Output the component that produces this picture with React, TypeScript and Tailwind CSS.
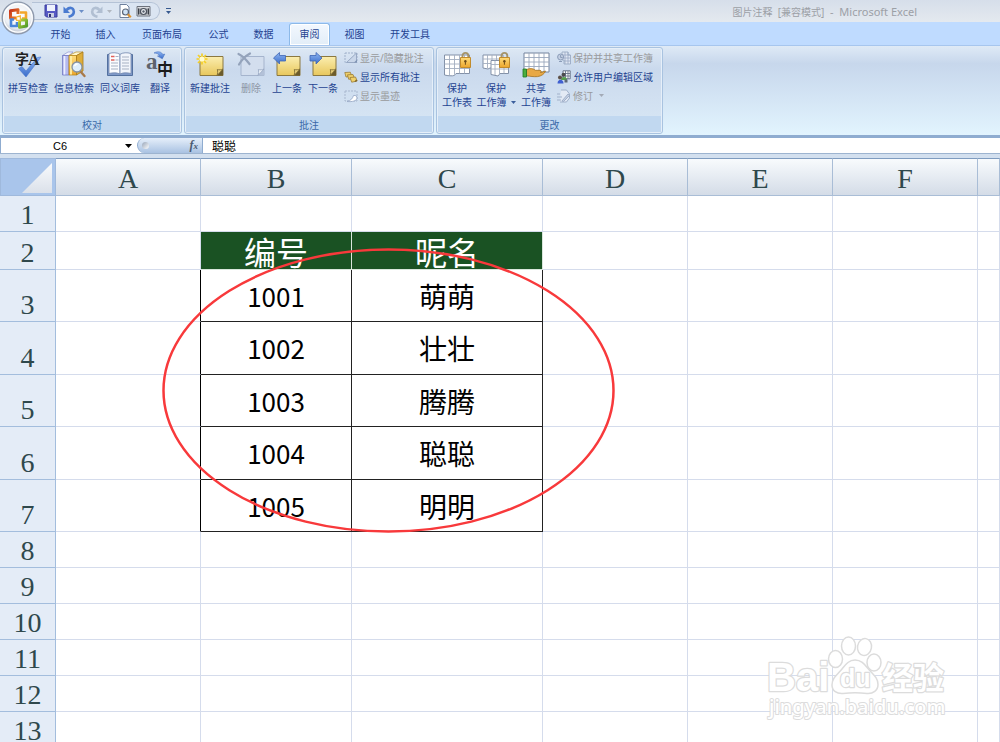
import type { ReactNode } from "react";

const UI_FONT = "font-['Noto_Sans','Noto_Sans_CJK_SC',sans-serif]";

/* ---------- Quick access icons ---------- */

function OfficeLogo() {
  return (
    <svg viewBox="0 0 34 34" className="size-[34px]" aria-hidden="true">
      <defs>
        <radialGradient id="orb" cx="0.5" cy="0.4" r="0.6">
          <stop offset="0" stopColor="#ffffff" />
          <stop offset="0.7" stopColor="#eceff4" />
          <stop offset="1" stopColor="#a9b2c1" />
        </radialGradient>
        <linearGradient id="orbRed" x1="0" y1="0" x2="1" y2="1">
          <stop offset="0" stopColor="#c4331b" />
          <stop offset="1" stopColor="#f08a2c" />
        </linearGradient>
        <linearGradient id="orbGreen" x1="0" y1="0" x2="1" y2="1">
          <stop offset="0" stopColor="#b9cf3a" />
          <stop offset="1" stopColor="#4d9a2a" />
        </linearGradient>
      </defs>
      <circle cx="17" cy="17" r="15.8" fill="url(#orb)" stroke="#8e99ac" strokeWidth="1.300" />
      <circle cx="17" cy="17" r="14.2" fill="none" stroke="#fff" strokeWidth="1.200" />
      <g fill="none" strokeLinejoin="round">
        <path d="M15 17H9.500V9.800L17 8.800V13" stroke="url(#orbRed)" strokeWidth="3" />
        <path d="M19 11.500H25V17.500H21" stroke="#f3a62a" strokeWidth="2.600" />
        <path d="M13 18.500H10v6.500h6V21" stroke="#4a86d8" strokeWidth="2.600" />
        <path d="M19 19h6.500v6L18.500 26.300V21.500z" stroke="url(#orbGreen)" strokeWidth="3" />
      </g>
      <path d="M15 15.500l5-1.500v6h-5z" fill="#f6b73c" />
      <path d="M16.200 16.200h2.600v2.600h-2.600z" fill="#fff" />
    </svg>
  );
}

function SaveIcon() {
  return (
    <svg viewBox="0 0 14 14" className="size-[14px]" aria-hidden="true">
      <path d="M1 1h12v12H2.500L1 11.500z" fill="#5659c4" stroke="#3a3e9e" />
      <path d="M3 1h8v6H3z" fill="#eef2fd" />
      <path d="M4 9h6v4H4z" fill="#c9cfe4" />
      <path d="M5 10h2v3H5z" fill="#2d3170" />
    </svg>
  );
}

function UndoIcon({ muted = false }: { muted?: boolean }) {
  const tone = muted ? "#b1bfd2" : "#4a7bd0";
  return (
    <svg viewBox="0 0 14 14" className={muted ? "size-[14px] -scale-x-100" : "size-[14px]"} aria-hidden="true">
      <path d="M6.500 12.800c4-1 5.700-3.300 5.200-6C11.200 3.500 7.500 2.800 4.500 6" fill="none" stroke={tone} strokeWidth="2.600" />
      <path d="M1.500 2.500V9H8z" fill={tone} />
    </svg>
  );
}

function PreviewIcon() {
  return (
    <svg viewBox="0 0 14 14" className="size-[14px]" aria-hidden="true">
      <path d="M2 .5h6.500L11 3v10.500H2z" fill="#fff" stroke="#6d7f9c" />
      <circle cx="7.500" cy="8" r="3" fill="#cfe2f6" stroke="#5b6678" strokeWidth="1.200" />
      <path d="M9.800 10.300l3 3" stroke="#dd9433" strokeWidth="2.200" />
    </svg>
  );
}

function CameraIcon() {
  return (
    <svg viewBox="0 0 15 14" className="h-[14px] w-[15px]" aria-hidden="true">
      <path d="M1 2.500h13v9.500H1z" fill="#d9dbdf" stroke="#6d727c" />
      <path d="M2 4.500h11v6H2z" fill="#8c9097" />
      <circle cx="7.500" cy="7.500" r="3" fill="#edf0f5" stroke="#4c525d" strokeWidth="1.200" />
      <circle cx="7.500" cy="7.500" r="1.200" fill="#59606d" />
      <path d="M2.500 4.500v6M12.500 4.500v6" stroke="#3a3f48" />
    </svg>
  );
}

function Caret({ className }: { className: string }) {
  return (
    <svg viewBox="0 0 5 3" className={`h-[3px] w-[5px] shrink-0 ${className}`} aria-hidden="true">
      <path d="M0 0h5L2.500 3z" fill="currentColor" />
    </svg>
  );
}

/* ---------- Large ribbon icons (28 x 28) ---------- */

function Big({ children }: { children: ReactNode }) {
  return (
    <svg viewBox="0 0 28 28" className="size-7 shrink-0 overflow-visible" aria-hidden="true">
      <defs>
        <linearGradient id="paper" x1="0" y1="0" x2="0" y2="1">
          <stop offset="0" stopColor="#fbeeb0" />
          <stop offset="1" stopColor="#e8c75c" />
        </linearGradient>
        <linearGradient id="blue" x1="0" y1="0" x2="0" y2="1">
          <stop offset="0" stopColor="#8fb6f2" />
          <stop offset="1" stopColor="#3a6dcb" />
        </linearGradient>
        <linearGradient id="gold" x1="0" y1="0" x2="0" y2="1">
          <stop offset="0" stopColor="#ffdc7a" />
          <stop offset="1" stopColor="#eba52c" />
        </linearGradient>
      </defs>
      {children}
    </svg>
  );
}

function SpellIcon() {
  return (
    <Big>
      <path d="M4.500 17.500l3.500-2 4 4.500L23.500 6.500l3.500-.5L12 26z" fill="url(#blue)" stroke="#4674cc" strokeWidth=".6" />
      <text x="1" y="12.500" fontSize="14" fontWeight="700" fill="#222" fontFamily="Noto Sans CJK SC, sans-serif">字</text>
      <text x="14" y="14" fontSize="16" fontWeight="700" fill="#222" fontFamily="Liberation Serif, serif">A</text>
    </Big>
  );
}

function ResearchIcon() {
  return (
    <Big>
      <path d="M2.500 4.500L8 1h5L9 4.500z" fill="#f3f4fd" stroke="#8d93cf" strokeWidth=".7" />
      <path d="M2.500 4.500H9V24H2.500z" fill="#b5baf0" stroke="#7278c2" strokeWidth=".8" />
      <path d="M4.500 5v18.500" stroke="#eceeff" strokeWidth="1.600" />
      <path d="M9 4.500L16 1h7l-6.500 3.500z" fill="#fff7cf" stroke="#b48a22" strokeWidth=".7" />
      <path d="M9 4.500h7.500V24H9z" fill="url(#gold)" stroke="#b98a1e" strokeWidth=".8" />
      <path d="M16.500 4.500L23 1v19l-6.500 4z" fill="#dfae3a" stroke="#a87a18" strokeWidth=".8" />
      <path d="M11 5v18.500" stroke="#fff0a8" strokeWidth="1.800" />
      <path d="M20.500 20.500l4 4.500" stroke="#a87a4a" strokeWidth="2.400" strokeLinecap="round" />
      <circle cx="17" cy="16" r="5" fill="#dff0fd" stroke="#8793a3" strokeWidth="1.300" />
      <path d="M14.500 15c.6-1.500 1.800-2 3-2" stroke="#fff" strokeWidth="1.300" fill="none" />
    </Big>
  );
}

function ThesaurusIcon() {
  return (
    <Big>
      <path d="M1.500 3.500h25v21h-25z" fill="#7f99c9" stroke="#54719f" />
      <path d="M3 2.500c4-1.200 8-1 11 .8V23c-3-1.500-7-1.500-11-.5z" fill="#fbfcff" stroke="#7187ad" strokeWidth=".8" />
      <path d="M25 2.500c-4-1.200-8-1-11 .8V23c3-1.500 7-1.500 11-.5z" fill="#f2f5fb" stroke="#7187ad" strokeWidth=".8" />
      <path d="M5 5.500h3.500M5 9h3.500" stroke="#e0605a" strokeWidth="1.300" />
      <path d="M9.500 5.500h3M9.500 9h3M5 12h7M5 15h7M5 18h7M16 6h7M16 9h7M16 12h7M16 15h7M16 18h7" stroke="#a7b1c3" strokeWidth="1" />
    </Big>
  );
}

function TranslateIcon() {
  return (
    <Big>
      <text x="0" y="18" fontSize="23" fontWeight="700" fill="#5d636d" fontFamily="Liberation Serif, serif">a</text>
      <text x="11" y="24" fontSize="16" fontWeight="700" fill="#1b1b1b" fontFamily="Noto Sans CJK SC, sans-serif">中</text>
      <path d="M8 2C12-.3 15.500.8 16.800 3.500l2-.4-2.500 4.700-4.800-2.700 2-.6C12.300 2.800 10.500 2 8 2z" fill="url(#blue)" stroke="#3c68ba" strokeWidth=".5" />
    </Big>
  );
}

function Note({ muted = false }: { muted?: boolean }) {
  return (
    <>
      <path d="M4 5.500h23V24.500H4z" fill={muted ? "#d3deee" : "url(#paper)"} stroke={muted ? "#a5b4cd" : "#8b7840"} strokeWidth="1" />
      <path d="M27 18L21 24.500h6z" fill={muted ? "#b3c1d8" : "#6b5b2c"} />
      <path d="M21 24.500c.8-2 .8-4 .3-6 2 .6 4 .3 5.700-.5z" fill={muted ? "#eaf0f8" : "#e8cf7a"} stroke={muted ? "#94a4c0" : "#75642f"} strokeWidth=".8" />
    </>
  );
}

function NewNoteIcon() {
  return (
    <Big>
      <Note />
      <path d="M6 2.500v11M.5 8h11M2 4l8 8M10 4l-8 8" stroke="#f5cf26" strokeWidth="1.700" />
      <circle cx="6" cy="8" r="2.600" fill="#fffbd2" />
    </Big>
  );
}

function DeleteNoteIcon() {
  return (
    <Big>
      <Note muted />
      <path d="M1.500 3c4 2 8 6 11 10M13 2.500C8.500 5 4.500 9 2 13.500" fill="none" stroke="#94a3bb" strokeWidth="2.200" strokeLinecap="round" />
    </Big>
  );
}

function PrevNoteIcon() {
  return (
    <Big>
      <Note />
      <path d="M.5 7L6.500 1.500v3h6V10h-6v3z" fill="url(#blue)" stroke="#3f66b4" strokeWidth=".8" />
    </Big>
  );
}

function NextNoteIcon() {
  return (
    <Big>
      <Note />
      <path d="M13 7L7 1.500v3H1V10h6v3z" fill="url(#blue)" stroke="#3f66b4" strokeWidth=".8" />
    </Big>
  );
}

function Padlock() {
  return (
    <>
      <path d="M19.500 7V4.800a2.900 2.900 0 0 1 5.800 0V7" fill="none" stroke="#a5946a" strokeWidth="1.900" />
      <path d="M17.500 6.500h10V16.500h-10z" fill="url(#gold)" stroke="#bd831f" strokeWidth=".9" />
      <circle cx="22.400" cy="10.300" r="1.200" fill="#6e4c18" />
      <path d="M21.900 10.500h1v3.200h-1z" fill="#6e4c18" />
    </>
  );
}

function ProtectSheetIcon() {
  return (
    <Big>
      <path d="M1.500 4h25v18.500H13c-1 2-3 2.500-5 2.300-2 .2-4-.3-6.500-.8z" fill="#fff" stroke="#8391a8" />
      <path d="M1.500 8.500h25M1.500 13h25M1.500 17.500h25M6.500 4v20.500M11.500 4v19.500M16.500 4v18.500M21.500 4v18.500" stroke="#a3aec0" strokeWidth=".9" />
      <Padlock />
    </Big>
  );
}

function ProtectBookIcon() {
  return (
    <Big>
      <path d="M1 4h20v13H8l-2 1-5-1z" fill="#fff" stroke="#8391a8" />
      <path d="M1 8h20M1 12.500h20M5.500 4v13M10 4v13M14.500 4v13" stroke="#a3aec0" strokeWidth=".9" />
      <path d="M9 9.500h17.500v13H18l-2 2.500-7-1.500z" fill="#fff" stroke="#8391a8" />
      <path d="M9 13.500h17.500M9 18h17.500M13 9.500v14.500M17.500 9.500v14M22 9.500v13" stroke="#a3aec0" strokeWidth=".9" />
      <Padlock />
    </Big>
  );
}

function ShareBookIcon() {
  return (
    <Big>
      <path d="M2 2h25v19H2z" fill="#fff" stroke="#75849e" />
      <path d="M2 6.500h25M2 11h25M2 15.500h25M7 2v19M12 2v19M17 2v19M22 2v19" stroke="#9aa7bc" strokeWidth=".9" />
      <path d="M4.500 18.500c4-1.500 6.500-1 9 .8h4.500c1.500.3 1.500 1.800.5 2.200 2 0 3.200-1.200 5-1.500-1 3-4 5-8 5.600-4 .3-7-.3-11-.8z" fill="#e8a845" stroke="#a4701c" strokeWidth=".8" />
      <path d="M1 18h3.500v8H1z" fill="#4cae3f" stroke="#1f7a22" strokeWidth=".8" />
    </Big>
  );
}

/* ---------- Small ribbon icons (14 x 14) ---------- */

function Small({ children }: { children: ReactNode }) {
  return (
    <svg viewBox="0 0 14 14" className="size-[14px] shrink-0" aria-hidden="true">
      {children}
    </svg>
  );
}

function ToggleNoteIcon() {
  return (
    <Small>
      <path d="M1 2h12v9.500H1z" fill="none" stroke="#9fb0ca" strokeDasharray="2 1" />
      <path d="M2.500 11.500L12.500 2v9.500z" fill="#c9d6e9" stroke="#98a9c4" />
      <path d="M13 8.500L10 11.500h3z" fill="#7f93b3" />
    </Small>
  );
}

function AllNotesIcon() {
  return (
    <Small>
      <g fill="#efd06c" stroke="#9c7c34" strokeWidth=".8">
        <path d="M.8 2.500l5.500-.3 1.500 4-5.800.8z" />
        <path d="M3.500 4.800l5.500-.3 1.500 4-5.800.8z" />
        <path d="M6 7.500l5.500-.5 1.700 4-5.500 1.200z" />
      </g>
      <path d="M13.200 11L10.500 12l1.500-2.500z" fill="#6b5220" />
    </Small>
  );
}

function InkIcon() {
  return (
    <Small>
      <path d="M1 2h12v10H1z" fill="none" stroke="#a8b7ce" strokeDasharray="2 1" />
      <path d="M3 12.500c4-1 5.500-3 6.500-6 2.500-.5 3.500 1 3.500 2.500C13 12 8 13 3 12.500z" fill="#fff" stroke="#9badc8" strokeWidth=".9" />
    </Small>
  );
}

function ProtectShareIcon() {
  return (
    <Small>
      <path d="M5 1h6v3h2.500v9H7V9H5z" fill="#dfe7f3" stroke="#9aaac4" strokeWidth=".9" />
      <path d="M8 1v12M11 1v12M5 4h8M5 7h8M7 10h6" stroke="#9aaac4" strokeWidth=".8" />
      <circle cx="3.600" cy="6" r="3" fill="#c3cfe2" stroke="#8b9cb8" />
      <path d="M3.600 4v2.500h2M2 10.500h3" stroke="#8b9cb8" fill="none" />
    </Small>
  );
}

function AllowUsersIcon() {
  return (
    <Small>
      <path d="M6 .8h7.200v8H6z" fill="#fff" stroke="#5b677d" strokeWidth=".9" />
      <path d="M6 3.500h7M6 6h7M8.500 1v8M11 1v8" stroke="#5b677d" strokeWidth=".8" />
      <circle cx="6.500" cy="4.800" r="2" fill="#4c4c4c" />
      <path d="M4 10c0-4 6-4 6 0z" fill="#57a04b" />
      <circle cx="3" cy="7.500" r="2" fill="#5d5148" />
      <path d="M.5 13.500c0-5 6-5 6 0z" fill="#3f5fd0" />
      <path d="M7.500 9.500h3v3h-3z" fill="#5b6678" />
    </Small>
  );
}

function TrackIcon() {
  return (
    <Small>
      <path d="M4 1h5.500L12.500 5v4l-3 4H3" fill="#e3eaf5" stroke="#a1b1ca" />
      <path d="M0 5h3M0 8h5M0 11h4" stroke="#a1b1ca" />
      <path d="M5 12l6-7 1.500 1.500-6 6z" fill="#c3cfe2" stroke="#95a6c1" strokeWidth=".8" />
    </Small>
  );
}

/* ---------- Ribbon building blocks ---------- */

type BigButtonProps = { icon: ReactNode; lines: string[]; width: string; muted?: boolean; caret?: boolean };

function BigButton({ icon, lines, width, muted, caret }: BigButtonProps) {
  return (
    <button
      type="button"
      disabled={muted}
      className={`flex ${width} shrink-0 flex-col items-center gap-0.5 whitespace-nowrap ${muted ? "text-[#8d96a6]" : "text-[#1f4391]"}`}
    >
      {icon}
      <span className="flex flex-col items-center">
        {lines.map((line, i) => (
          <span key={line} className="flex items-center gap-1 text-[10px] leading-[14px]">
            {line}
            {caret && i === lines.length - 1 && <Caret className="text-[#3c5f9c]" />}
          </span>
        ))}
      </span>
    </button>
  );
}

type SmallButtonProps = { icon: ReactNode; label: string; muted?: boolean; caret?: boolean };

function SmallButton({ icon, label, muted, caret }: SmallButtonProps) {
  return (
    <button
      type="button"
      disabled={muted}
      className={`flex h-[19px] items-center gap-0.5 text-[10px] leading-[14px] whitespace-nowrap ${muted ? "text-[#999a9c]" : "text-[#1f4391]"}`}
    >
      {icon}
      {label}
      {caret && <Caret className="ml-1 text-[#a3aab6]" />}
    </button>
  );
}

function Group({ title, width, children }: { title: string; width: string; children: ReactNode }) {
  return (
    <section
      aria-label={title}
      className={`flex ${width} shrink-0 flex-col overflow-hidden rounded-[3px] border border-[#a9c3e0] bg-linear-to-b from-[#dde8f4] via-[#cad9ed] via-25% to-[#d9e8f5] shadow-[inset_0_0_0_1px_#e6eff9]`}
    >
      <div className="flex flex-1 pt-[3px] pl-0.5">{children}</div>
      <h2 className="mx-px mb-px h-4 bg-[#c1d8f0] text-center text-[10px] leading-[18px] text-[#3a68a8]">{title}</h2>
    </section>
  );
}

function Ribbon() {
  return (
    <div className="flex h-[90px] gap-0.5 border-t border-[#a7c6ee] bg-linear-to-b from-[#dfeaf6] from-0% via-[#c7d7ec] via-20% to-[#e2f4fe] px-0.5 py-px">
      <Group title="校对" width="w-[180px]">
        <BigButton width="w-[46px]" icon={<SpellIcon />} lines={["拼写检查"]} />
        <BigButton width="w-[46px]" icon={<ResearchIcon />} lines={["信息检索"]} />
        <BigButton width="w-[46px]" icon={<ThesaurusIcon />} lines={["同义词库"]} />
        <BigButton width="w-[34px]" icon={<TranslateIcon />} lines={["翻译"]} />
      </Group>
      <Group title="批注" width="w-[250px]">
        <BigButton width="w-[46px]" icon={<NewNoteIcon />} lines={["新建批注"]} />
        <BigButton width="w-[36px]" icon={<DeleteNoteIcon />} lines={["删除"]} muted />
        <BigButton width="w-[36px]" icon={<PrevNoteIcon />} lines={["上一条"]} />
        <BigButton width="w-[36px]" icon={<NextNoteIcon />} lines={["下一条"]} />
        <div className="-mt-[3px] ml-[3px] flex flex-col">
          <SmallButton icon={<ToggleNoteIcon />} label="显示/隐藏批注" muted />
          <SmallButton icon={<AllNotesIcon />} label="显示所有批注" />
          <SmallButton icon={<InkIcon />} label="显示墨迹" muted />
        </div>
      </Group>
      <Group title="更改" width="w-[227px]">
        <BigButton width="w-[36px]" icon={<ProtectSheetIcon />} lines={["保护", "工作表"]} />
        <BigButton width="w-[42px]" icon={<ProtectBookIcon />} lines={["保护", "工作簿"]} caret />
        <BigButton width="w-[38px]" icon={<ShareBookIcon />} lines={["共享", "工作簿"]} />
        <div className="-mt-[3px] ml-0.5 flex flex-col">
          <SmallButton icon={<ProtectShareIcon />} label="保护并共享工作簿" muted />
          <SmallButton icon={<AllowUsersIcon />} label="允许用户编辑区域" />
          <SmallButton icon={<TrackIcon />} label="修订" muted caret />
        </div>
      </Group>
    </div>
  );
}

/* ---------- Title bar and tabs ---------- */

function TitleBar() {
  return (
    <header className="flex h-[22px] items-center bg-linear-to-b from-[#d6deea] to-[#e4e9ef] pl-8">
      <div className="flex h-[18px] items-center rounded-r-full border border-l-0 border-[#b4c2d6] bg-[#dbe5f2] pr-2 pl-3">
        <button type="button" aria-label="保存"><SaveIcon /></button>
        <button type="button" aria-label="撤消" className="ml-1 flex items-center gap-[3px]"><UndoIcon /><Caret className="text-[#6c8fc7]" /></button>
        <button type="button" aria-label="恢复" className="ml-1.5 flex items-center gap-[3px]" disabled><UndoIcon muted /><Caret className="text-[#b1b7c0]" /></button>
        <button type="button" aria-label="打印预览" className="ml-1.5"><PreviewIcon /></button>
        <button type="button" aria-label="照相机" className="ml-1"><CameraIcon /></button>
      </div>
      <button type="button" aria-label="自定义快速访问工具栏" className="ml-1.5 flex flex-col items-center gap-0.5 text-[#36598f]">
        <span className="h-px w-[5px] bg-current" />
        <Caret className="" />
      </button>
      <h1 className="mr-[83px] ml-auto pt-0.5 text-[11px] leading-4 whitespace-pre text-[#9ca0a6]">
        <span className="text-[10px]">图片注释  [兼容模式]</span>
        {"  -  Microsoft Excel"}
      </h1>
    </header>
  );
}

const TABS = [
  { name: "开始", width: "w-[45px]" },
  { name: "插入", width: "w-[45px]" },
  { name: "页面布局", width: "w-[68px]" },
  { name: "公式", width: "w-[45px]" },
  { name: "数据", width: "w-[45px]" },
  { name: "审阅", width: "w-[41px]" },
  { name: "视图", width: "w-[49px]" },
  { name: "开发工具", width: "w-[62px]" },
];

function Tabs() {
  return (
    <div role="tablist" className="flex h-[23px] bg-[#bfdbff] pt-px pl-[38px]">
      {TABS.map((tab) => {
        const active = tab.name === "审阅";
        return (
          <button
            key={tab.name}
            type="button"
            role="tab"
            aria-selected={active}
            className={`${tab.width} shrink-0 text-[10px] leading-[21px] whitespace-nowrap text-[#1f4391] ${
              active ? "ml-[3px] rounded-t-[3px] border border-b-0 border-[#8db9e8] bg-linear-to-b from-[#f3f8fe] to-[#e2edf8] shadow-[inset_0_0_0_1px_#fff]" : ""
            }`}
          >
            {tab.name}
          </button>
        );
      })}
    </div>
  );
}

/* ---------- Formula bar ---------- */

function FormulaBar() {
  return (
    <div className="flex h-[23px] flex-col border-t-[3px] border-b-4 border-t-[#8facd0] border-b-[#d3e0ef]">
      <div className="flex flex-1 border-b border-[#9db4d0] bg-white">
        <div className="flex w-[137px] items-center border-l border-[#8facd0] pr-[5px]">
          <input
            aria-label="名称框"
            defaultValue="C6"
            className="h-3 w-[118px] bg-transparent text-center font-['Liberation_Sans',sans-serif] text-[11px] leading-3 text-black outline-none"
          />
          <svg viewBox="0 0 7 4" className="ml-auto h-1 w-[7px]" aria-hidden="true"><path d="M0 0h7L3.500 4z" fill="#000" /></svg>
        </div>
        <div className="flex w-[66px] items-center justify-between rounded-l-full border-r border-l border-[#8facd0] bg-linear-to-b from-[#e6effa] to-[#a9c2e2] pr-1 pl-1">
          <span className="size-[7px] rounded-full bg-linear-to-br from-[#98a5b8] to-white" />
          <button type="button" aria-label="插入函数" className="font-['Liberation_Serif',serif] text-[12px] leading-[14px] font-bold text-[#4b5a70] italic">
            f<span className="text-[9px]">x</span>
          </button>
        </div>
        <input
          aria-label="编辑栏"
          defaultValue="聪聪"
          className="min-w-0 flex-1 bg-transparent px-[9px] font-['Noto_Sans_CJK_SC',sans-serif] text-[12px] leading-[14px] text-black outline-none"
        />
      </div>
    </div>
  );
}

/* ---------- Worksheet ---------- */

const COLUMNS = ["A", "B", "C", "D", "E", "F", ""];

const ROWS: { n: number; height: string; id?: string; name?: string }[] = [
  { n: 1, height: "h-9" },
  { n: 2, height: "h-[38px]", id: "编号", name: "昵名" },
  { n: 3, height: "h-[52px]", id: "1001", name: "萌萌" },
  { n: 4, height: "h-[53px]", id: "1002", name: "壮壮" },
  { n: 5, height: "h-[52px]", id: "1003", name: "腾腾" },
  { n: 6, height: "h-[53px]", id: "1004", name: "聪聪" },
  { n: 7, height: "h-[52px]", id: "1005", name: "明明" },
  { n: 8, height: "h-9" },
  { n: 9, height: "h-9" },
  { n: 10, height: "h-9" },
  { n: 11, height: "h-9" },
  { n: 12, height: "h-9" },
  { n: 13, height: "h-9" },
];

function cellClass(n: number, col: string) {
  const inTable = n >= 3 && n <= 7;
  if (n === 2 && (col === "B" || col === "C")) {
    return "border-r border-b border-[#d9e6dc] bg-[#1a5223] text-white text-[32px] leading-9";
  }
  if (inTable && col === "A") return "border-r border-b border-r-black border-b-[#d5dcec]";
  if (inTable && col === "B") return "border-r border-b border-[#222] text-[26px] leading-8 text-black";
  if (inTable && col === "C") return "border-r border-b border-[#222] text-[28px] leading-8 text-black";
  return "border-r border-b border-[#d5dcec]";
}

function Sheet() {
  return (
    <table className="w-full table-fixed border-separate border-spacing-0 font-['Noto_Sans_CJK_SC',sans-serif]">
      <colgroup>
        <col className="w-14" />
        <col className="w-[145px]" />
        <col className="w-[151px]" />
        <col className="w-[191px]" />
        <col className="w-[145px]" />
        <col className="w-[145px]" />
        <col className="w-[145px]" />
        <col />
      </colgroup>
      <thead>
        <tr className="h-[38px]">
          <th className="border border-[#9fb9dc] bg-[#a9c5eb] p-0 align-bottom">
            <svg viewBox="0 0 30 30" className="mr-[3px] mb-0.5 ml-auto size-[30px]" aria-label="全选" role="img">
              <defs>
                <linearGradient id="corner" x1="0" y1="0" x2="0" y2="1">
                  <stop offset="0" stopColor="#f8fafc" />
                  <stop offset="1" stopColor="#dbe1ea" />
                </linearGradient>
              </defs>
              <path d="M30 0v30H0z" fill="url(#corner)" />
            </svg>
          </th>
          {COLUMNS.map((c) => (
            <th
              key={c}
              scope="col"
              className="border-t border-r border-b border-[#a9bdd6] border-t-[#7f9cc0] bg-linear-to-b from-[#f8fbfd] to-[#d4dce7] p-0 pt-1 text-center font-['Liberation_Serif',serif] text-[28px] leading-8 font-normal text-[#2f484c]"
            >
              {c}
            </th>
          ))}
        </tr>
      </thead>
      <tbody>
        {ROWS.map((row) => (
          <tr key={row.n} className={row.height}>
            <th
              scope="row"
              className="border-r border-b border-[#a3bddd] bg-[#e4ecf7] p-0 text-center align-bottom font-['Liberation_Serif',serif] text-[28px] leading-8 font-normal text-[#2f484c]"
            >
              {row.n}
            </th>
            {COLUMNS.map((c) => (
              <td key={c} className={`p-0 text-center ${cellClass(row.n, c)}`}>
                {c === "B" ? row.id : c === "C" ? row.name : undefined}
              </td>
            ))}
          </tr>
        ))}
      </tbody>
    </table>
  );
}

function Watermark() {
  return (
    <svg viewBox="0 0 184 92" className="pointer-events-none absolute top-[474px] left-[764px] h-[92px] w-[184px]" role="img" aria-label="Baidu 经验 jingyan.baidu.com">
      <g fill="#fff" stroke="#dcdcdc" strokeWidth="1.500">
        <ellipse cx="71.500" cy="27" rx="7" ry="8.500" />
        <ellipse cx="84.500" cy="14" rx="7" ry="9" />
        <ellipse cx="100.500" cy="15" rx="7" ry="8.500" transform="rotate(10 100.500 15)" />
        <ellipse cx="110" cy="30.500" rx="7" ry="8.500" />
        <path d="M91 28c-6 0-9 4-13 9-5 6-10 9-10 16 0 6 5 9 11 8.500 8-1 16-1 24 0 6 .5 11-3 11-9 0-7-5-10-10-16-4-5-7-8.500-13-8.500z" />
      </g>
      <g fill="#fff" stroke="#dcdcdc" strokeWidth="2.500" paintOrder="stroke" strokeLinejoin="round" fontWeight="700">
        <text x="3" y="59" fontSize="40" fontFamily="Liberation Sans, sans-serif">Bai</text>
        <text x="76" y="55" fontSize="25" fontFamily="Liberation Sans, sans-serif">du</text>
        <text x="118" y="57" fontSize="31" fontFamily="Noto Sans CJK SC, sans-serif">经验</text>
        <text x="5" y="82" fontSize="20" fontFamily="Noto Sans, sans-serif" fontWeight="500" strokeWidth="2">jingyan.baidu.com</text>
      </g>
    </svg>
  );
}

export default function App() {
  return (
    <div className={`relative flex h-screen flex-col overflow-hidden bg-white ${UI_FONT}`}>
      <TitleBar />
      <Tabs />
      <Ribbon />
      <FormulaBar />
      <main className="relative min-h-0 flex-1 overflow-hidden">
        <Sheet />
        <svg viewBox="0 0 454 286" className="pointer-events-none absolute top-[90px] left-[161px] h-[286px] w-[454px]" aria-hidden="true">
          <ellipse cx="227.500" cy="142.500" rx="225" ry="141" fill="none" stroke="#f8393b" strokeWidth="2.500" />
        </svg>
        <Watermark />
      </main>
      <button type="button" aria-label="Office 按钮" className="absolute top-px left-px">
        <OfficeLogo />
      </button>
    </div>
  );
}
